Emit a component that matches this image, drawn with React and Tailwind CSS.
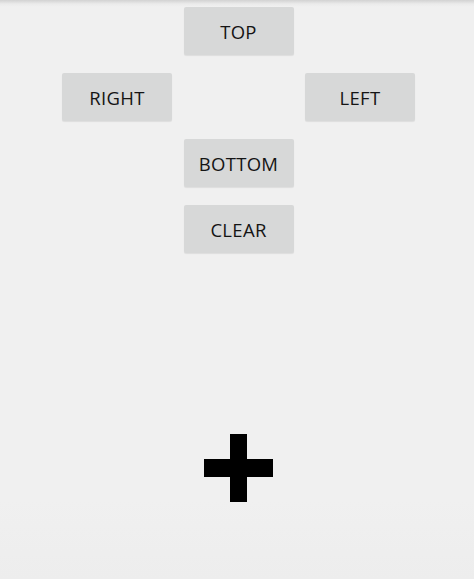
import React from 'react';

const Btn = ({ children }) => (
  <button
    type="button"
    className="w-[110px] h-[48px] pt-[2px] rounded-[2px] bg-[#d7d8d8] text-[#141414] text-[18.5px] tracking-[0.3px] shadow-[0_1px_1px_rgba(0,0,0,0.08)]"
    style={{ fontFamily: '"Open Sans", "Noto Sans", sans-serif' }}
  >
    {children}
  </button>
);

export default function App() {
  return (
    <div className="w-[474px] h-[579px] overflow-hidden bg-[linear-gradient(to_bottom,#d2d2d2_0px,#ebebeb_4px,#f0f0f0_7px,#f0f0f0_500px,#ededed_100%)]">
      <div className="flex flex-col items-center pt-[7px] pl-[3px] gap-[18px]">
        <Btn>TOP</Btn>
        <div className="flex gap-[133px]">
          <Btn>RIGHT</Btn>
          <Btn>LEFT</Btn>
        </div>
        <Btn>BOTTOM</Btn>
        <Btn>CLEAR</Btn>
        <svg width="69" height="68" viewBox="0 0 69 68" className="mt-[163px]">
          <rect x="26" y="0" width="17" height="68" fill="#000" />
          <rect x="0" y="25" width="69" height="18" fill="#000" />
        </svg>
      </div>
    </div>
  );
}
